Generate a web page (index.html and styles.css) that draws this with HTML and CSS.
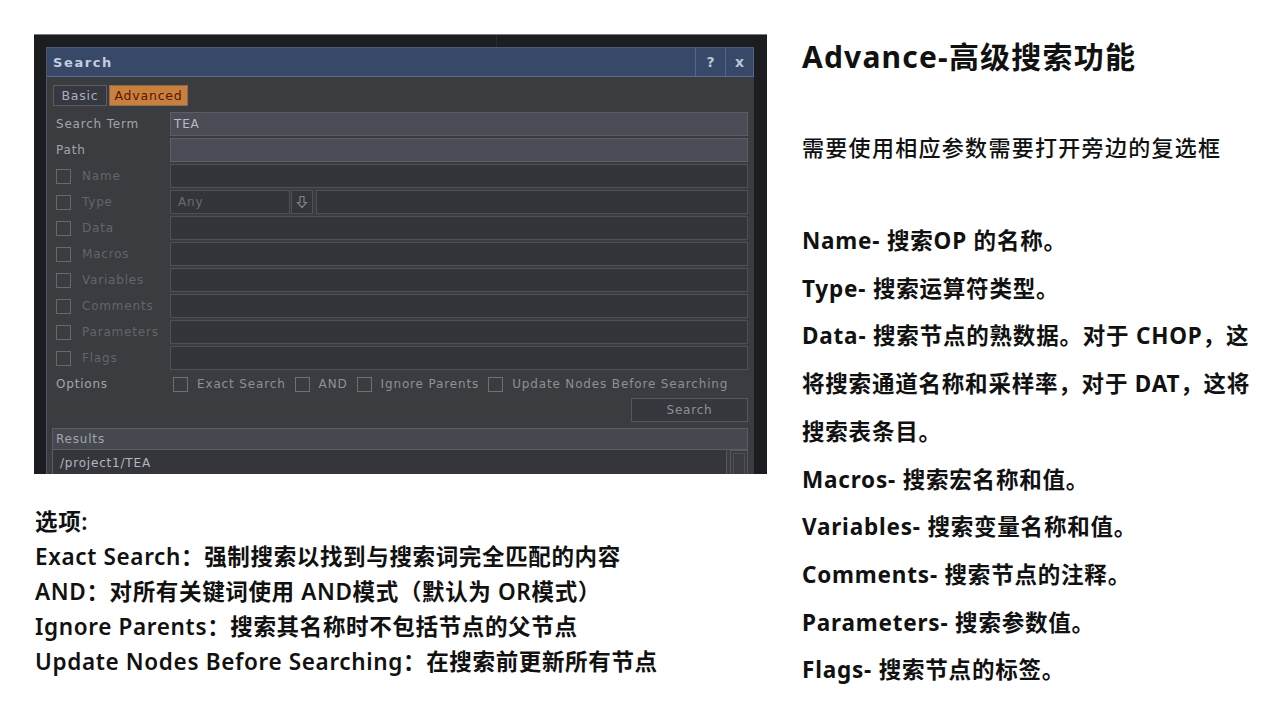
FILE: index.html
```html
<!DOCTYPE html>
<html lang="zh">
<head>
<meta charset="utf-8">
<title>Advance 高级搜索功能</title>
<link rel="stylesheet" href="styles.css">
</head>
<body>
<div class="page">
  <div class="left">
    <div class="shot">
      <div class="topstrip"><div class="ts-a"></div><div class="ts-b"></div></div>
      <div class="dialog">
        <div class="titlebar">
          <span class="ttl">Search</span>
          <span class="tbtn">?</span>
          <span class="tbtn">x</span>
        </div>
        <div class="dbody">
          <div class="tabs"><span class="tab">Basic</span><span class="tab tab-on">Advanced</span></div>
          <div class="form">
            <div class="row"><span class="lbl">Search Term</span><div class="fld fld-lt">TEA</div></div>
            <div class="row"><span class="lbl">Path</span><div class="fld fld-lt"></div></div>
            <div class="row"><span class="lbl off"><i class="cb"></i>Name</span><div class="fld"></div></div>
            <div class="row"><span class="lbl off"><i class="cb"></i>Type</span>
              <div class="typegrp">
                <div class="fld fld-any">Any</div>
                <div class="fld fld-arrow"><svg width="12" height="14" viewBox="0 0 12 14"><path d="M4 1.5H8V7.5H10.5L6 12.5L1.5 7.5H4Z" fill="none" stroke="#7d8087" stroke-width="1.2"/></svg></div>
                <div class="fld fld-grow"></div>
              </div>
            </div>
            <div class="row"><span class="lbl off"><i class="cb"></i>Data</span><div class="fld"></div></div>
            <div class="row"><span class="lbl off"><i class="cb"></i>Macros</span><div class="fld"></div></div>
            <div class="row"><span class="lbl off"><i class="cb"></i>Variables</span><div class="fld"></div></div>
            <div class="row"><span class="lbl off"><i class="cb"></i>Comments</span><div class="fld"></div></div>
            <div class="row"><span class="lbl off"><i class="cb"></i>Parameters</span><div class="fld"></div></div>
            <div class="row"><span class="lbl off"><i class="cb"></i>Flags</span><div class="fld"></div></div>
            <div class="row"><span class="lbl">Options</span>
              <div class="opts">
                <i class="cb cb-on"></i><span class="opt">Exact Search</span>
                <i class="cb cb-on"></i><span class="opt">AND</span>
                <i class="cb cb-on"></i><span class="opt">Ignore Parents</span>
                <i class="cb cb-on"></i><span class="opt">Update Nodes Before Searching</span>
              </div>
            </div>
            <div class="row row-btn"><div class="btn">Search</div></div>
          </div>
          <div class="results">
            <div class="res-head">Results</div>
            <div class="res-body">
              <div class="res-list"><div class="res-item">/project1/TEA</div></div>
              <div class="res-scroll"><div class="res-thumb"></div></div>
            </div>
          </div>
        </div>
      </div>
    </div>
    <div class="notes">
      <p>选项:</p>
      <p>Exact Search：强制搜索以找到与搜索词完全匹配的内容</p>
      <p>AND：对所有关键词使用 AND模式（默认为 OR模式）</p>
      <p>Ignore Parents：搜索其名称时不包括节点的父节点</p>
      <p>Update Nodes Before Searching：在搜索前更新所有节点</p>
    </div>
  </div>
  <div class="right">
    <h1 class="title">Advance-高级搜索功能</h1>
    <p class="sub">需要使用相应参数需要打开旁边的复选框</p>
    <div class="list">
      <p>Name- 搜索OP 的名称。</p>
      <p>Type- 搜索运算符类型。</p>
      <p>Data- 搜索节点的熟数据。对于 CHOP，这<br>将搜索通道名称和采样率，对于 DAT，这将<br>搜索表条目。</p>
      <p>Macros- 搜索宏名称和值。</p>
      <p>Variables- 搜索变量名称和值。</p>
      <p>Comments- 搜索节点的注释。</p>
      <p>Parameters- 搜索参数值。</p>
      <p>Flags- 搜索节点的标签。</p>
    </div>
  </div>
</div>
</body>
</html>
```

FILE: styles.css
```css
* { box-sizing: border-box; }
html, body { margin: 0; padding: 0; background: #ffffff; }
body { width: 1268px; height: 714px; overflow: hidden; }
p { margin: 0; }

.page {
  display: flex;
  padding-left: 34px;
  padding-top: 34px;
}
.left { width: 733px; flex: none; }
.right {
  margin-left: 35px;
  margin-top: -34px;
  padding-top: 37px;
  font-family: "Noto Sans", "Noto Sans CJK SC", sans-serif;
  color: #111111;
}

/* ---------- screenshot panel ---------- */
.shot {
  width: 733px;
  height: 440px;
  background: #1c1d21;
  border-top: 1px solid #7c7c80;
  overflow: hidden;
  font-family: "DejaVu Sans", sans-serif;
  font-size: 12px;
  letter-spacing: 0.8px;
}
.topstrip { display: flex; height: 12px; }
.ts-a { width: 463px; border-right: 1px solid #2a2b30; }
.ts-b { flex: 1; }

.dialog {
  margin-left: 12px;
  width: 708px;
  height: 430px;
  background: #3b3c3f;
  border-left: 1px solid #4f5866;
}
.titlebar {
  display: flex;
  align-items: stretch;
  height: 30px;
  background: #374868;
  border-top: 1px solid #4a5a7c;
  border-bottom: 1px solid #5b6b8c;
}
.ttl {
  flex: 1;
  display: flex;
  align-items: center;
  padding-left: 6px;
  font-weight: bold;
  font-size: 13px;
  letter-spacing: 1.6px;
  color: #c5cde0;
}
.tbtn {
  width: 30px;
  display: flex;
  align-items: center;
  justify-content: center;
  border-left: 1px solid #56668a;
  font-weight: bold;
  font-size: 14px;
  color: #bcc4d6;
  letter-spacing: 0;
}
.tbtn:last-child { width: 29px; border-right: 1px solid #56668a; }

.dbody { padding: 8px 6px 0 6px; }
.tabs { display: flex; gap: 2px; height: 21px; }
.tab {
  display: flex;
  align-items: center;
  justify-content: center;
  width: 54px;
  background: #35383f;
  border: 1px solid #5b5d63;
  color: #a8afbd;
  font-size: 12.5px;
}
.tab-on {
  width: 79px;
  background: #c9803e;
  border-color: #8c6a4e;
  color: #5a1400;
}

.form { margin-top: 6px; display: flex; flex-direction: column; gap: 2px; }
.row { display: flex; height: 24px; align-items: stretch; }
.lbl {
  width: 117px;
  flex: none;
  display: flex;
  align-items: center;
  padding-left: 3px;
  color: #a0a4ac;
}
.lbl.off { color: #62656b; }
.cb {
  display: inline-block;
  width: 15px;
  height: 15px;
  border: 1px solid #66686d;
  margin-right: 11px;
  flex: none;
}
.fld {
  flex: 1;
  background: #33353b;
  border: 1px solid #4e5056;
  display: flex;
  align-items: center;
  padding-left: 3px;
  color: #b8bcc4;
}
.fld-lt { background: #4a4d55; border-color: #5c5e64; }
.typegrp { flex: 1; display: flex; gap: 3px; }
.fld-any { flex: none; width: 120px; padding-left: 7px; color: #686b71; }
.fld-arrow { flex: none; width: 22px; margin-left: -2px; justify-content: center; padding-left: 0; }
.fld-grow { flex: 1; }

.opts { flex: 1; display: flex; align-items: center; padding-left: 3px; letter-spacing: 0.85px; }
.opts .cb { margin-right: 9px; border-color: #6e7075; }
.opt { color: #8c9098; margin-right: 9px; }

.row-btn { justify-content: flex-end; }
.btn {
  width: 117px;
  background: #35373d;
  border: 1px solid #55575d;
  display: flex;
  align-items: center;
  justify-content: center;
  color: #8c9098;
}

.results { margin-top: 6px; margin-left: -1px; }
.res-head {
  height: 22px;
  background: #45484f;
  border: 1px solid #5b5d63;
  display: flex;
  align-items: center;
  padding-left: 3px;
  color: #a0a4ac;
}
.res-body { display: flex; height: 60px; }
.res-list {
  flex: 1;
  background: #34363c;
  border-left: 1px solid #5b5d63;
  border-right: 1px solid #55575d;
  padding-top: 3px;
}
.res-item { padding-left: 7px; line-height: 20px; color: #b2b6be; }
.res-scroll {
  width: 18px;
  margin-left: 3px;
  border: 1px solid #55575d;
  padding: 2px;
}
.res-thumb { height: 40px; background: #3a3c42; border: 1px solid #4e5056; }

/* ---------- notes under the screenshot ---------- */
.notes {
  margin-top: 30px;
  padding-left: 1px;
  font-family: "Noto Sans", "Noto Sans CJK SC", sans-serif;
  font-size: 22.5px;
  font-weight: 600;
  letter-spacing: 0.65px;
  line-height: 35px;
  color: #111111;
}

/* ---------- right column ---------- */
.title {
  margin: 0;
  font-size: 30px;
  font-weight: 700;
  letter-spacing: 1.2px;
  line-height: 40px;
}
.sub {
  margin-top: 55px;
  font-size: 22px;
  font-weight: 500;
  letter-spacing: 1.3px;
  line-height: 30px;
}
.list {
  margin-top: 55px;
  font-size: 22.5px;
  font-weight: 700;
  letter-spacing: 0.8px;
  line-height: 47.7px;
}
```
